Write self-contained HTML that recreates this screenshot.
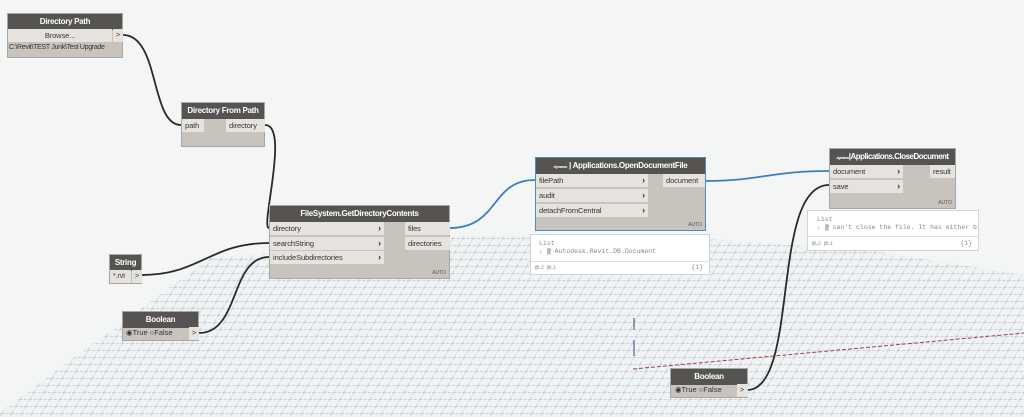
<!DOCTYPE html>
<html><head><meta charset="utf-8"><style>
*{box-sizing:border-box;margin:0;padding:0}
body{width:1024px;height:417px;overflow:hidden;background:#f4f5f5;font-family:"Liberation Sans",sans-serif;position:relative}
.n{position:absolute;background:#c8c4bd;border:1px solid #a9a6a0}
.h{background:#555452;color:#fff;font-weight:bold;font-size:8px;letter-spacing:-0.3px;text-align:center;height:16px;line-height:16px;white-space:nowrap;overflow:hidden}
.r{position:absolute;background:#e6e3de;font-size:7.5px;letter-spacing:-0.1px;color:#333;height:13px;line-height:13px;padding-left:3px;white-space:nowrap}
.ar{position:absolute;right:3px;font-weight:bold;font-size:9px}
.auto{position:absolute;right:3px;bottom:2px;font-size:5px;color:#555}
.pv{position:absolute;background:#fff;border:1px solid #d4d4d4;font-family:"Liberation Mono",monospace;font-size:6.5px;color:#888}
svg{position:absolute;left:0;top:0}
</style></head><body>
<svg width="1024" height="417">
<defs><pattern id="g" width="10" height="7" patternUnits="userSpaceOnUse" patternTransform="skewX(-30)">
<rect width="10" height="7" fill="#f0f3f4"/><path d="M0 .5H10M.5 0V7" stroke="#bfcad0" stroke-width=".8" stroke-dasharray="3 1.5"/></pattern></defs>
<polygon points="0,417 0,412 210,258 460,236 700,238 880,252 1024,275 1024,417" fill="url(#g)"/>
<path d="M633 369 L1024 333" stroke="#a04050" stroke-width="1" stroke-dasharray="4 2"/>
<path d="M634 318V330M634 340V356" stroke="#5560a0" stroke-width="1.2"/>
<g fill="none" stroke="#2a2a2a" stroke-width="1.8">
<path d="M123 35 C160 35,150 125,181 125"/>
<path d="M265 125 C290 125,260 228,269 228"/>
<path d="M142 275 C200 275,210 243,269 243"/>
<path d="M199 333 C240 333,230 257,269 257"/>
<path d="M747 390 C800 390,770 185,829 185"/>
</g>
<g fill="none" stroke="#3a7fbf" stroke-width="1.8">
<path d="M449 228 C500 228,490 180,535 180"/>
<path d="M705 181 C760 181,770 171,829 171"/>
</g>
</svg>

<div class="n" style="left:7px;top:13px;width:116px;height:45px">
<div class="h">Directory Path</div>
<div class="r" style="left:0;top:15px;width:104px;text-align:center;padding:0">Browse...</div>
<div class="r" style="left:105px;top:15px;width:10px;font-size:7px">&gt;</div>
<div style="position:absolute;left:1px;top:30px;font-size:7px;letter-spacing:-0.3px;color:#333;white-space:nowrap">C:\Revit\TEST Junk\Test Upgrade</div>
</div>

<div class="n" style="left:181px;top:102px;width:84px;height:45px">
<div class="h">Directory From Path</div>
<div class="r" style="left:0;top:16px;width:22px">path</div>
<div class="r" style="left:44px;top:16px;width:39px">directory</div>
</div>

<div class="n" style="left:269px;top:205px;width:181px;height:74px">
<div class="h">FileSystem.GetDirectoryContents</div>
<div class="r" style="left:0;top:16px;width:114px">directory<span class="ar">›</span></div>
<div class="r" style="left:0;top:31px;width:114px">searchString<span class="ar">›</span></div>
<div class="r" style="left:0;top:45px;width:114px">includeSubdirectories<span class="ar">›</span></div>
<div class="r" style="left:135px;top:16px;width:45px">files</div>
<div class="r" style="left:135px;top:31px;width:45px">directories</div>
<div class="auto">AUTO</div>
</div>

<div class="n" style="left:109px;top:254px;width:33px;height:30px">
<div class="h">String</div>
<div class="r" style="left:0;top:15px;width:21px;font-size:7px">*.rvt</div>
<div class="r" style="left:22px;top:15px;width:10px;font-size:7px">&gt;</div>
</div>

<div class="n" style="left:122px;top:311px;width:77px;height:30px">
<div class="h">Boolean</div>
<div style="position:absolute;left:3px;top:16px;font-size:7.5px;color:#333">◉True ○False</div>
<div class="r" style="left:66px;top:15px;width:10px;font-size:7px">&gt;</div>
</div>

<div class="n" style="left:535px;top:157px;width:171px;height:74px;border-color:#4a8cc6">
<div class="h"><span style="font-size:4px">dynamo</span> | Applications.OpenDocumentFile</div>
<div class="r" style="left:0;top:16px;width:112px">filePath<span class="ar">›</span></div>
<div class="r" style="left:0;top:31px;width:112px">audit<span class="ar">›</span></div>
<div class="r" style="left:0;top:46px;width:112px">detachFromCentral<span class="ar">›</span></div>
<div class="r" style="left:127px;top:16px;width:42px">document</div>
<div class="auto">AUTO</div>
</div>
<div class="pv" style="left:530px;top:234px;width:180px;height:41px">
<div style="position:absolute;left:8px;top:5px">List</div>
<div style="position:absolute;left:8px;top:13px">↓ <span style="background:#ddd">@</span> Autodesk.Revit.DB.Document</div>
<div style="position:absolute;left:0;right:0;top:26px;border-top:1px solid #ddd"></div>
<div style="position:absolute;left:4px;top:30px;font-size:5px">@L2 @L1</div>
<div style="position:absolute;right:6px;top:29px">{1}</div>
</div>

<div class="n" style="left:829px;top:148px;width:127px;height:61px">
<div class="h" style="letter-spacing:-0.5px"><span style="font-size:4px">dynamo</span>|Applications.CloseDocument</div>
<div class="r" style="left:0;top:16px;width:73px">document<span class="ar">›</span></div>
<div class="r" style="left:0;top:31px;width:73px">save<span class="ar">›</span></div>
<div class="r" style="left:100px;top:16px;width:25px">result</div>
<div class="auto">AUTO</div>
</div>
<div class="pv" style="left:807px;top:210px;width:172px;height:41px;overflow:hidden">
<div style="position:absolute;left:9px;top:5px">List</div>
<div style="position:absolute;left:9px;top:13px;white-space:nowrap">↓ <span style="background:#ddd">@</span> can't close the file. It has either b</div>
<div style="position:absolute;left:0;right:0;top:25px;border-top:1px solid #ddd"></div>
<div style="position:absolute;left:4px;top:30px;font-size:5px">@L2 @L1</div>
<div style="position:absolute;right:6px;top:29px">{1}</div>
</div>

<div class="n" style="left:670px;top:368px;width:78px;height:30px">
<div class="h">Boolean</div>
<div style="position:absolute;left:4px;top:16px;font-size:7.5px;color:#333">◉True ○False</div>
<div class="r" style="left:66px;top:15px;width:11px;font-size:7px">&gt;</div>
</div>
</body></html>
